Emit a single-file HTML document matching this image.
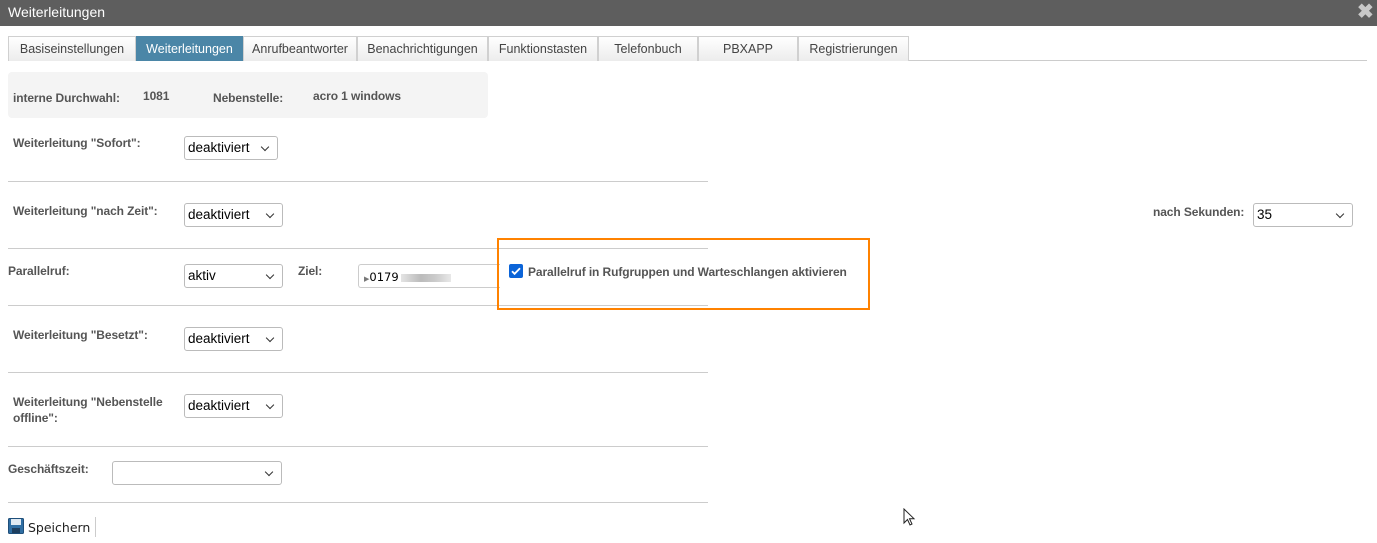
<!DOCTYPE html>
<html><head><meta charset="utf-8"><style>
*{box-sizing:border-box;margin:0;padding:0}
body{width:1377px;height:543px;background:#fff;position:relative;overflow:hidden;font-family:"Liberation Sans",Arial,sans-serif;color:#555}
.a{position:absolute}
.title{left:0;top:0;width:1377px;height:26px;background:#5e5e5e;color:#fff;font-size:14px;line-height:24px;padding-left:8px}
.tab{position:absolute;top:36px;height:25px;border:1px solid #d0d0d0;border-bottom:none;background:linear-gradient(#fff,#ececec);font-size:12.5px;color:#444;text-align:center;line-height:25px}
.tab.act{background:#4b86a7;color:#fff;border-color:#4b86a7}
.b{font-weight:bold;font-size:12px;color:#555;letter-spacing:-0.1px}
.sel{position:absolute;height:24px;border:1px solid #bbb;border-radius:3px;background:#fff;font-family:"Liberation Sans",sans-serif;font-size:13.5px;color:#000;padding-left:3px;line-height:22px}
.sel:after{content:"";position:absolute;right:9px;top:7px;width:5px;height:5px;border-right:1.5px solid #333;border-bottom:1.5px solid #333;transform:rotate(45deg)}
.hr{position:absolute;left:8px;width:700px;height:1px;background:#ccc}
</style></head><body>
<div class="a title">Weiterleitungen</div>
<div class="a" style="left:1357px;top:3px;color:#c8c8c8;font-size:20px;font-weight:bold;line-height:18px">✖</div>

<div class="tab" style="left:8px;width:128px">Basiseinstellungen</div>
<div class="tab act" style="left:136px;width:107px">Weiterleitungen</div>
<div class="tab" style="left:243px;width:114px">Anrufbeantworter</div>
<div class="tab" style="left:357px;width:131px">Benachrichtigungen</div>
<div class="tab" style="left:488px;width:110px">Funktionstasten</div>
<div class="tab" style="left:598px;width:100px">Telefonbuch</div>
<div class="tab" style="left:698px;width:100px">PBXAPP</div>
<div class="tab" style="left:798px;width:111px">Registrierungen</div>
<div class="a" style="left:909px;top:60px;width:458px;height:1px;background:#ccc"></div>

<div class="a" style="left:8px;top:72px;width:480px;height:46px;background:#f4f4f4;border-radius:4px"></div>
<div class="a b" style="left:13px;top:91px">interne Durchwahl:</div>
<div class="a b" style="left:143px;top:89px">1081</div>
<div class="a b" style="left:213px;top:91px">Nebenstelle:</div>
<div class="a b" style="left:313px;top:89px">acro 1 windows</div>

<div class="a b" style="left:13px;top:136px">Weiterleitung "Sofort":</div>
<div class="sel" style="left:184px;top:136px;width:94px">deaktiviert</div>
<div class="hr" style="top:181px"></div>

<div class="a b" style="left:13px;top:204px">Weiterleitung "nach Zeit":</div>
<div class="sel" style="left:184px;top:203px;width:99px">deaktiviert</div>
<div class="a b" style="left:1153px;top:205px">nach Sekunden:</div>
<div class="sel" style="left:1253px;top:203px;width:100px">35</div>
<div class="hr" style="top:248px"></div>

<div class="a b" style="left:8px;top:264px">Parallelruf:</div>
<div class="sel" style="left:184px;top:264px;width:99px">aktiv</div>
<div class="a b" style="left:298px;top:264px">Ziel:</div>
<div class="a" style="left:358px;top:264px;width:142px;height:24px;border:1px solid #ccc;border-right:none;border-radius:3px 0 0 3px;font-family:'DejaVu Sans',sans-serif;font-size:11.5px;color:#000;line-height:24px;padding-left:5px"><span style="font-size:7px;color:#777">▶</span>0179<span style="display:inline-block;width:50px;height:8px;background:linear-gradient(90deg,#e4e4e4,#bbb 40%,#ccc 70%,#e8e8e8);vertical-align:middle;margin-left:2px"></span></div>
<div class="hr" style="top:305px"></div>

<div class="a" style="left:497px;top:238px;width:373px;height:72px;border:2px solid #ff8200"></div>
<div class="a" style="left:509px;top:264px;width:14px;height:14px;background:#0b64d8;border-radius:2px"><svg width="14" height="14" viewBox="0 0 14 14"><path d="M3 7.2l2.6 2.6L11 4.2" stroke="#fff" stroke-width="1.8" fill="none"/></svg></div>
<div class="a b" style="left:528px;top:265px">Parallelruf in Rufgruppen und Warteschlangen aktivieren</div>

<div class="a b" style="left:13px;top:328px">Weiterleitung "Besetzt":</div>
<div class="sel" style="left:184px;top:327px;width:99px">deaktiviert</div>
<div class="hr" style="top:372px"></div>

<div class="a b" style="left:13px;top:394px;line-height:16px">Weiterleitung "Nebenstelle<br>offline":</div>
<div class="sel" style="left:184px;top:394px;width:99px">deaktiviert</div>
<div class="hr" style="top:446px"></div>

<div class="a b" style="left:8px;top:462px">Geschäftszeit:</div>
<div class="sel" style="left:112px;top:461px;width:170px"></div>
<div class="hr" style="top:502px"></div>

<svg class="a" style="left:8px;top:518px" width="16" height="16" viewBox="0 0 16 16"><rect x="0.5" y="0.5" width="15" height="15" rx="1" fill="#2f6ea3" stroke="#1f4f7a"/><rect x="3" y="1" width="10" height="6" fill="#dfe9f2"/><rect x="4" y="10" width="8" height="5" fill="#1d3e5e"/></svg>
<div class="a" style="left:28px;top:520px;font-size:12.5px;color:#222;font-family:'DejaVu Sans',sans-serif">Speichern</div>
<div class="a" style="left:95px;top:517px;width:1px;height:20px;background:#ccc"></div>

<svg class="a" style="left:903px;top:508px" width="14" height="20" viewBox="0 0 14 20"><path d="M1 1v14l3.5-3.5 2.5 5.5 2-1-2.5-5.3H11z" fill="#fff" stroke="#222" stroke-width="1"/></svg>
</body></html>
